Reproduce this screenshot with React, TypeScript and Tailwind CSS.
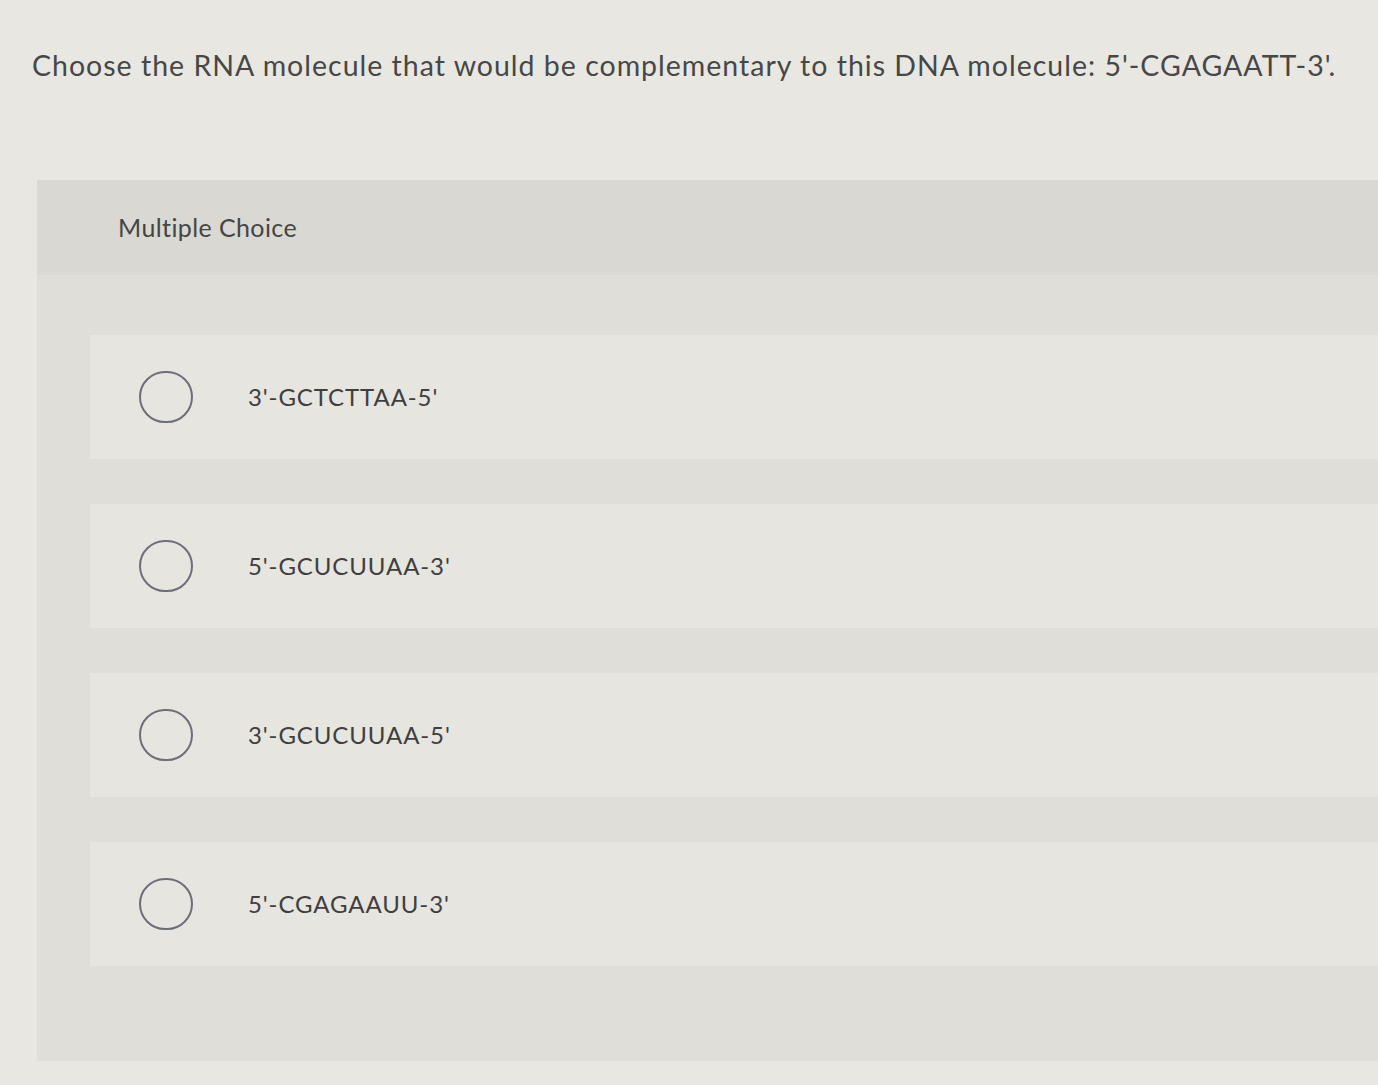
const options = [
  "3'-GCTCTTAA-5'",
  "5'-GCUCUUAA-3'",
  "3'-GCUCUUAA-5'",
  "5'-CGAGAAUU-3'",
];

function Radio() {
  return <span className="block w-[54px] h-[52px] rounded-full border-2 border-[#6e6e7a] shrink-0" />;
}

export default function App() {
  return (
    <div
      className="w-[1378px] h-[1085px] overflow-hidden bg-[#e8e7e2] text-[#4a4a4a]"
      style={{ fontFamily: "Lato, 'Open Sans', sans-serif" }}
    >
      <h1 className="pl-[32px] pt-[46px] text-[28.5px] leading-[38px] font-normal tracking-[1px] text-[#474747] whitespace-nowrap">
        Choose the RNA molecule that would be complementary to this DNA molecule: 5'-CGAGAATT-3'.
      </h1>

      <div className="ml-[37px] mt-[96px] bg-[#dfded9] pb-[95px]">
        <div className="h-[95px] bg-[#d9d8d3] pl-[81px] flex items-center">
          <span className="text-[25px] tracking-[0.4px] text-[#454545]">Multiple Choice</span>
        </div>
        <div className="pl-[53px] pt-[60px] flex flex-col gap-[45px]">
          {options.map((opt) => (
            <div key={opt} className="h-[124px] bg-[#e6e5e0] flex items-center pl-[49px]">
              <Radio />
              <span className="ml-[55px] text-[24px] text-[#3f3f3f] tracking-[0.9px]">{opt}</span>
            </div>
          ))}
        </div>
      </div>
    </div>
  );
}
